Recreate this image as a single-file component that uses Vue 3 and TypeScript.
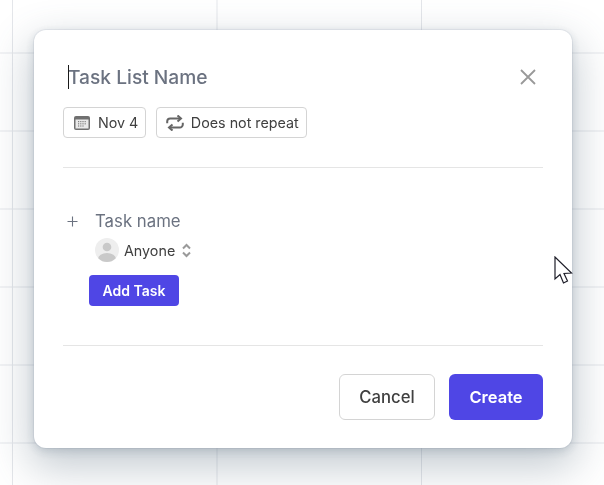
<script setup lang="ts">
const columns = 3
</script>

<template>
  <div class="stage">
    <div class="calendar" :data-cols="columns"></div>
    <section class="modal">
      <header class="head">
        <div class="title"><span class="caret"></span>Task List Name</div>
        <svg class="close" width="18" height="18" viewBox="0 0 18 18" fill="none" stroke="#999999" stroke-width="1.8">
          <path d="M2 2 L16 16 M16 2 L2 16" />
        </svg>
      </header>
      <div class="chips">
        <button class="chip">
          <svg width="16" height="14" viewBox="0 0 16 14">
            <rect x="0" y="0" width="16" height="14" rx="2" fill="#707070" />
            <rect x="1.5" y="3.5" width="13" height="9" fill="#e9e9e9" />
            <g fill="#808080">
              <rect x="4" y="5" width="1.2" height="1.2" /><rect x="6.2" y="5" width="1.2" height="1.2" /><rect x="8.4" y="5" width="1.2" height="1.2" /><rect x="10.6" y="5" width="1.2" height="1.2" />
              <rect x="4" y="7.2" width="1.2" height="1.2" /><rect x="6.2" y="7.2" width="1.2" height="1.2" /><rect x="8.4" y="7.2" width="1.2" height="1.2" /><rect x="10.6" y="7.2" width="1.2" height="1.2" />
              <rect x="4" y="9.4" width="1.2" height="1.2" /><rect x="6.2" y="9.4" width="1.2" height="1.2" /><rect x="8.4" y="9.4" width="1.2" height="1.2" />
            </g>
          </svg>
          <span>Nov 4</span>
        </button>
        <button class="chip chip-repeat">
          <svg width="18" height="16" viewBox="0 0 18 16" fill="none" stroke="#666" stroke-width="2">
            <path d="M1.2 8.2 V6.5 A3 3 0 0 1 4.2 3.5 H14" />
            <path d="M11.5 0.4 L15 3.5 L11.5 6.6" />
            <path d="M16.8 7.8 V9.5 A3 3 0 0 1 13.8 12.5 H4" />
            <path d="M6.5 9.4 L3 12.5 L6.5 15.6" />
          </svg>
          <span>Does not repeat</span>
        </button>
      </div>
      <hr class="rule first" />
      <div class="task">
        <div class="task-row">
          <svg class="plus" width="11" height="11" viewBox="0 0 11 11" stroke="#6b7280" stroke-width="1.1">
            <path d="M5.5 0.5 V10.5 M0.5 5.5 H10.5" />
          </svg>
          <span class="task-name">Task name</span>
        </div>
        <div class="assignee">
          <svg class="avatar" width="24" height="24" viewBox="0 0 24 24">
            <defs>
              <clipPath id="avatar-clip"><circle cx="12" cy="12" r="12" /></clipPath>
            </defs>
            <circle cx="12" cy="12" r="12" fill="#eeeeee" />
            <g clip-path="url(#avatar-clip)" fill="#c9c9c9">
              <circle cx="12" cy="9" r="4.3" />
              <ellipse cx="12" cy="21" rx="9" ry="6" />
            </g>
          </svg>
          <span class="anyone">Anyone</span>
          <svg width="9" height="15" viewBox="0 0 9 15" fill="none" stroke="#9a9a9a" stroke-width="2">
            <path d="M1 5.5 L4.5 2 L8 5.5" />
            <path d="M1 9.5 L4.5 13 L8 9.5" />
          </svg>
        </div>
        <button class="add">Add Task</button>
      </div>
      <hr class="rule second" />
      <footer class="foot">
        <button class="btn cancel">Cancel</button>
        <button class="btn create">Create</button>
      </footer>
    </section>
    <svg class="cursor" width="20" height="30" viewBox="0 0 20 30">
      <path d="M1 1 V23 L6 18.5 L9.5 27 L13.5 25 L10 17.5 L17.5 17 Z" fill="#fff" stroke="#1d1d28" stroke-width="1.2" stroke-linejoin="miter" />
    </svg>
  </div>
</template>

<style scoped>
.stage {
  position: relative;
  width: 604px;
  height: 485px;
  overflow: hidden;
  background-color: #fff;
  font-family: Inter, "Liberation Sans", sans-serif;
}
.calendar {
  position: absolute;
  inset: 0;
  background-image:
    linear-gradient(to right, #e4e6ea 1px, transparent 1px),
    linear-gradient(to bottom, #e4e6ea 1px, transparent 1px);
  background-size: 204.5px 100%, 100% 78px;
  background-position: 12px 0, 0 52.5px;
}
.modal {
  position: absolute;
  left: 34px;
  top: 30px;
  width: 538px;
  height: 418px;
  box-sizing: border-box;
  padding: 0 29px;
  background: #fff;
  border-radius: 12px;
  box-shadow: 0 16px 42px 4px rgba(75, 95, 115, 0.32), 0 3px 10px rgba(75, 95, 115, 0.22), 0 0 0 1px rgba(200, 205, 215, 0.25);
  display: flex;
  flex-direction: column;
  will-change: transform;
}
.head {
  display: flex;
  justify-content: space-between;
  align-items: center;
  box-sizing: border-box;
  height: 59px;
  margin-top: 17px;
  padding-left: 5px;
  padding-right: 6px;
}
.title {
  position: relative;
  color: #6b7280;
  font-size: 19.2px;
  font-weight: 500;
  line-height: 24px;
}
.caret {
  position: absolute;
  left: 0;
  top: 0;
  width: 1px;
  height: 24px;
  background: #1a1a1a;
}
.close { display: block; }
.chips {
  display: flex;
  gap: 10px;
  margin-top: 1px;
}
.chip {
  height: 31px;
  box-sizing: border-box;
  padding: 0 6.5px 0 10px;
  display: flex;
  align-items: center;
  gap: 8px;
  background: #fff;
  border: 1px solid #d4d4d4;
  border-radius: 4px;
  color: #404040;
  font: 430 14.3px Inter, "Liberation Sans", sans-serif;
}
.chip-repeat { gap: 7px; padding-left: 9px; padding-right: 7px; }
.rule {
  border: 0;
  height: 1px;
  margin: 0;
  background: #e5e5e5;
}
.rule.first { margin-top: 29px; }
.task {
  margin-top: 43px;
  display: flex;
  flex-direction: column;
  align-items: flex-start;
}
.task-row {
  display: flex;
  align-items: center;
  height: 20px;
  padding-left: 4px;
}
.plus { display: block; margin-right: 17px; margin-top: 1px; }
.task-name {
  color: #6b7280;
  font-size: 16.8px;
  line-height: 20px;
}
.assignee {
  display: flex;
  align-items: center;
  margin-top: 7px;
  margin-left: 32px;
  height: 24px;
}
.avatar { display: block; margin-right: 5px; }
.anyone {
  color: #404040;
  font-size: 14.3px;
  font-weight: 430;
  margin-right: 7px;
}
.add {
  margin-top: 13px;
  margin-left: 26px;
  width: 90px;
  height: 31px;
  border: 0;
  border-radius: 4px;
  background: #4f46e5;
  color: #fff;
  font: 600 14px Inter, "Liberation Sans", sans-serif;
  padding: 0;
}
.rule.second { margin-top: 39px; }
.foot {
  display: flex;
  justify-content: flex-end;
  gap: 14px;
  margin-top: 28px;
}
.btn {
  height: 46px;
  border-radius: 6px;
  font: 600 16.5px Inter, "Liberation Sans", sans-serif;
  padding: 0;
  box-sizing: border-box;
}
.cancel {
  width: 96px;
  background: #fff;
  border: 1px solid #d4d4d4;
  color: #404040;
  font-weight: 450;
  font-size: 16.7px;
}
.create {
  width: 94px;
  border: 0;
  background: #4f46e5;
  color: #fff;
}
.cursor {
  position: absolute;
  left: 554px;
  top: 256px;
}
</style>
